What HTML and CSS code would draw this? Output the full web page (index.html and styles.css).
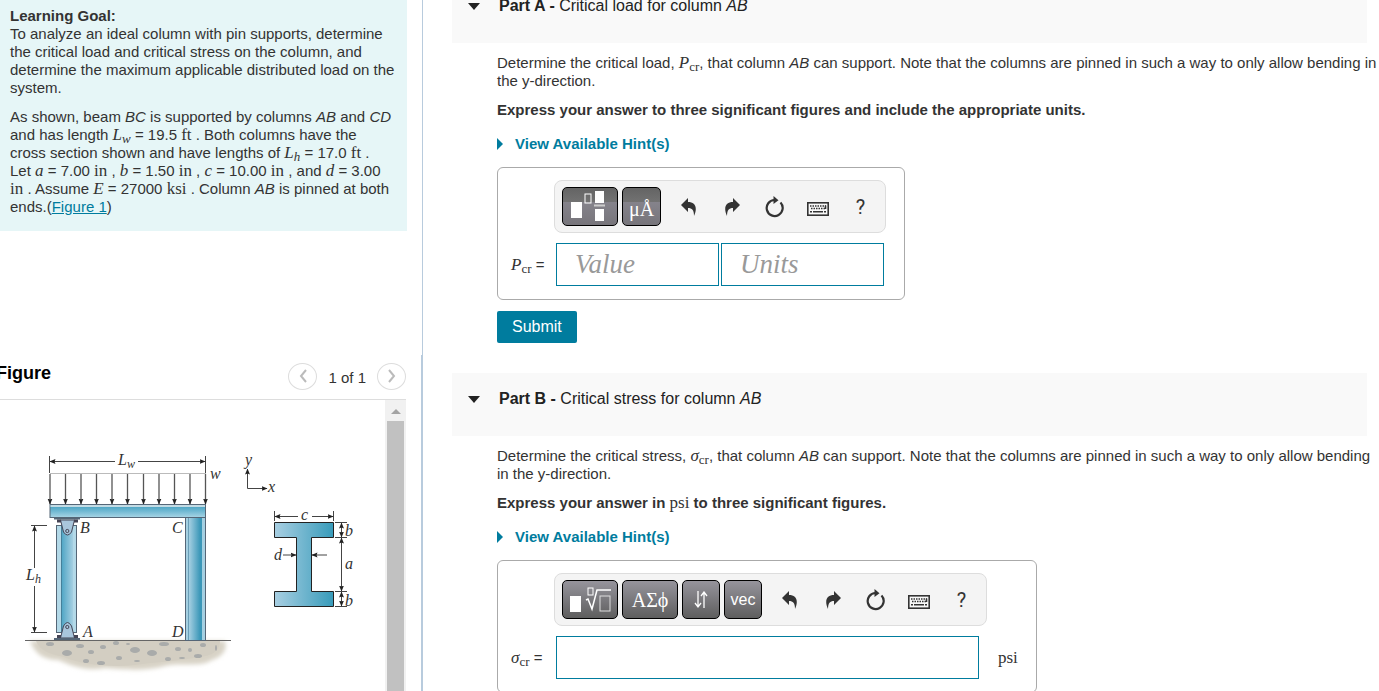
FILE: index.html
```html
<!DOCTYPE html>
<html lang="en">
<head>
    <meta charset="utf-8">
    <title>Critical load and critical stress</title>
    <link rel="stylesheet" href="styles.css">
</head>
<body>
    <!-- shared toolbar icons -->
    <svg class="defs" width="0" height="0">
        <symbol id="undo" viewBox="0 0 16 18">
            <path d="M0 7 L7 0 V4 C14 4 17 9 13 18 C13 12 11 10 7 10 V14 Z" fill="#333"/>
        </symbol>
        <symbol id="redo" viewBox="0 0 16 18">
            <path d="M16 7 L9 0 V4 C2 4 -1 9 3 18 C3 12 5 10 9 10 V14 Z" fill="#333"/>
        </symbol>
        <symbol id="reset" viewBox="0 0 20 22">
            <path d="M15.500 6.500 A8 8 0 1 1 9.500 4" fill="none" stroke="#333" stroke-width="2.200"/>
            <path d="M8.500 0 L13.500 4.200 L8.500 8 Z" fill="#333"/>
        </symbol>
        <symbol id="keyboard" viewBox="0 0 22 14">
            <rect x="0.800" y="0.800" width="20.400" height="12.400" fill="#f8f8f8" stroke="#333" stroke-width="1.600"/>
            <path d="M3 4 H19 M4 6.500 H19" stroke="#333" stroke-width="1.600" stroke-dasharray="1.500 1"/>
            <path d="M3 9.800 H5 M6 9.800 H16 M17 9.800 H19 M18.500 3.500 V7" stroke="#333" stroke-width="1.600"/>
        </symbol>
    </svg>

    <div class="page">
        <aside class="side">
            <section class="goal-pane">
                <div class="goal">
                    <p><b>Learning Goal:</b><br>
                    To analyze an ideal column with pin supports, determine the critical load and critical stress on the column, and determine the maximum applicable distributed load on the system.</p>
                    <p>As shown, beam <i>BC</i> is supported by columns <i>AB</i> and <i>CD</i> and has length <span class="math"><i>L</i><sub><i>w</i></sub></span> = 19.5 <span class="math">ft</span> . Both columns have the cross section shown and have lengths of <span class="math"><i>L</i><sub><i>h</i></sub></span> = 17.0 <span class="math">ft</span> .<br>
                    Let <i class="math">a</i> = 7.00 <span class="math">in</span> , <i class="math">b</i> = 1.50 <span class="math">in</span> , <i class="math">c</i> = 10.00 <span class="math">in</span> , and <i class="math">d</i> = 3.00 <span class="math">in</span> . Assume <i class="math">E</i> = 27000 <span class="math">ksi</span> . Column <i>AB</i> is pinned at both ends.(<a href="#figure">Figure 1</a>)</p>
                </div>
            </section>
            <section class="figure-pane" id="figure">
                <div class="figure-head">
                    <h2>Figure</h2>
                    <div class="pager">
                        <button type="button" aria-label="Previous figure"><svg width="8" height="14" viewBox="0 0 8 14"><path d="M7 1 L2 7 L7 13" fill="none" stroke="#bbb" stroke-width="2"/></svg></button>
                        <span>1 of 1</span>
                        <button type="button" aria-label="Next figure"><svg width="8" height="14" viewBox="0 0 8 14"><path d="M1 1 L6 7 L1 13" fill="none" stroke="#bbb" stroke-width="2"/></svg></button>
                    </div>
                </div>
                <div class="figure-view">
                    <svg class="drawing" viewBox="0 400 385 291" width="385" height="291">
                        <defs>
                            <linearGradient id="beam" x1="0" y1="0" x2="0" y2="1">
                                <stop offset="0" stop-color="#3f9dbd"/><stop offset="0.500" stop-color="#6fb8d2"/><stop offset="1" stop-color="#a9d5e5"/>
                            </linearGradient>
                            <linearGradient id="web">
                                <stop offset="0" stop-color="#4ba3c3"/><stop offset="1" stop-color="#a5cfe2"/>
                            </linearGradient>
                            <linearGradient id="colcd">
                                <stop offset="0" stop-color="#a5cfe2"/><stop offset="0.850" stop-color="#3b97b8"/><stop offset="1" stop-color="#3b97b8"/>
                            </linearGradient>
                            <linearGradient id="section" gradientUnits="userSpaceOnUse" x1="274" y1="0" x2="334" y2="0">
                                <stop offset="0" stop-color="#a9cfe2"/><stop offset="1" stop-color="#379bba"/>
                            </linearGradient>
                            <filter id="soft" x="-10%" y="-20%" width="120%" height="140%"><feGaussianBlur stdDeviation="2"/></filter>
                            <marker id="tip" viewBox="0 0 6 6" refX="5.500" refY="3" markerWidth="6" markerHeight="6" markerUnits="userSpaceOnUse" orient="auto-start-reverse"><path d="M0 0.500 L6 3 L0 5.500 L1 3 Z" fill="#222"/></marker>
                        </defs>

                        <!-- ground -->
                        <path d="M30 641 H225 C228 650 222 657 212 660 C200 668 180 662 165 666 C145 672 120 669 105 668 C85 672 70 665 58 660 C42 660 34 652 30 641 Z" fill="#d8d3c6" filter="url(#soft)"/>
                        <path d="M36 641 H220 C220 652 210 656 200 657 C180 661 155 662 135 665 C110 668 80 664 64 657 C48 654 40 650 36 641 Z" fill="#d3cec2"/>
                        <g fill="#a9abaa">
                            <ellipse cx="50" cy="644" rx="4" ry="2"/><ellipse cx="67" cy="653" rx="5" ry="3"/><ellipse cx="80" cy="646" rx="4" ry="2"/>
                            <ellipse cx="91" cy="652" rx="3" ry="2"/><ellipse cx="103" cy="647" rx="3" ry="2"/><ellipse cx="116" cy="643" rx="3" ry="2"/>
                            <ellipse cx="135" cy="650" rx="5" ry="3"/><ellipse cx="152" cy="653" rx="5" ry="3"/><ellipse cx="164" cy="644" rx="5" ry="2"/>
                            <ellipse cx="178" cy="649" rx="3" ry="2"/><ellipse cx="198" cy="656" rx="4" ry="2"/><ellipse cx="203" cy="645" rx="3" ry="2"/>
                            <ellipse cx="86" cy="661" rx="3" ry="2"/><ellipse cx="101" cy="663" rx="4" ry="2"/><ellipse cx="119" cy="658" rx="3" ry="2"/>
                            <ellipse cx="137" cy="661" rx="3" ry="1"/><ellipse cx="168" cy="659" rx="3" ry="2"/><ellipse cx="182" cy="658" rx="3" ry="1"/>
                            <ellipse cx="128" cy="644" rx="2" ry="1"/><ellipse cx="190" cy="650" rx="2" ry="2"/><ellipse cx="216" cy="648" rx="1" ry="3"/>
                        </g>
                        <path d="M25 640.500 H231" stroke="#666"/>

                        <!-- distributed load -->
                        <path d="M50 473.500 H206" stroke="#bbb"/>
                        <g stroke="#555" stroke-width="1.300">
                            <path d="M50 474 V504" marker-end="url(#tip)"/><path d="M65.500 474 V504" marker-end="url(#tip)"/><path d="M81 474 V504" marker-end="url(#tip)"/>
                            <path d="M96.500 474 V504" marker-end="url(#tip)"/><path d="M112 474 V504" marker-end="url(#tip)"/><path d="M127.500 474 V504" marker-end="url(#tip)"/>
                            <path d="M143.500 474 V504" marker-end="url(#tip)"/><path d="M159 474 V504" marker-end="url(#tip)"/><path d="M174.500 474 V504" marker-end="url(#tip)"/>
                            <path d="M190 474 V504" marker-end="url(#tip)"/><path d="M205.500 474 V504" marker-end="url(#tip)"/>
                        </g>

                        <!-- column CD and beam BC -->
                        <rect x="185.500" y="517.500" width="20" height="123" fill="#a5d0e2" stroke="#567"/>
                        <rect x="189" y="518" width="13" height="122" fill="url(#colcd)"/>
                        <path d="M188.500 518 V640" stroke="#6a9fb8"/>
                        <rect x="50" y="504.500" width="155.500" height="13" fill="url(#beam)" stroke="#567"/>
                        <rect x="50.500" y="505" width="154.500" height="2" fill="#c3dce5"/>

                        <!-- column AB -->
                        <rect x="56.500" y="525.500" width="20" height="107" fill="#b3d9e8" stroke="#567"/>
                        <rect x="61" y="526" width="12" height="106" fill="url(#web)"/>
                        <path d="M61.500 526 V632" stroke="#45809a"/>

                        <!-- pin brackets -->
                        <g fill="#a9c6dc" stroke="#445">
                            <path d="M60.500 520 H74.500 L71.500 532 Q67.500 538 63.500 532 Z"/>
                            <circle cx="67.300" cy="531" r="1.600"/>
                            <path d="M60.500 638 L63.500 626 Q67.500 619 71.500 626 L74.500 638 Z"/>
                            <circle cx="67.300" cy="627" r="1.600"/>
                        </g>
                        <path d="M54 518.500 H80 M54 639 H80" stroke="#567" stroke-width="2"/>
                        <path d="M57 521 H61 M74 521 H78 M57 636.500 H61 M74 636.500 H78" stroke="#445" stroke-width="3"/>

                        <!-- dimension lines of the frame -->
                        <g fill="none" stroke="#444">
                            <path d="M49.500 456 V473 M205.500 456 V473"/>
                            <path d="M115 461.500 H50" marker-end="url(#tip)"/>
                            <path d="M138 461.500 H205" marker-end="url(#tip)"/>
                            <path d="M31 525.500 H47 M31 632.500 H47"/>
                            <path d="M34.500 568 V526" marker-end="url(#tip)"/>
                            <path d="M34.500 586 V632" marker-end="url(#tip)"/>
                        </g>

                        <!-- axes -->
                        <g fill="none" stroke="#444">
                            <path d="M247.500 488.500 V469" marker-end="url(#tip)"/>
                            <path d="M247.500 488.500 H267" marker-end="url(#tip)"/>
                        </g>

                        <!-- cross section -->
                        <path d="M274.500 522.500 H333.500 V537.500 H311.500 V591.500 H333.500 V606.500 H274.500 V591.500 H296.500 V537.500 H274.500 Z" fill="url(#section)" stroke="#222"/>
                        <g fill="none" stroke="#444">
                            <path d="M274.500 511 V521 M333.500 511 V521"/>
                            <path d="M298 516.500 H275" marker-end="url(#tip)"/>
                            <path d="M312 516.500 H333" marker-end="url(#tip)"/>
                            <path d="M335 522.500 H347 M335 537.500 H347 M335 591.500 H347 M335 606.500 H347"/>
                            <path d="M341.500 523 V537" marker-start="url(#tip)" marker-end="url(#tip)"/>
                            <path d="M341.500 538 V591" marker-start="url(#tip)" marker-end="url(#tip)"/>
                            <path d="M341.500 592 V606" marker-start="url(#tip)" marker-end="url(#tip)"/>
                            <path d="M283 555 H296" marker-end="url(#tip)"/>
                            <path d="M327 555 H312" marker-end="url(#tip)"/>
                        </g>

                        <g class="labels">
                            <text x="118" y="465">L<tspan class="small" dy="3">w</tspan></text>
                            <text x="210" y="479">w</text>
                            <text x="80" y="533">B</text>
                            <text x="172" y="533">C</text>
                            <text x="83" y="637">A</text>
                            <text x="172" y="637">D</text>
                            <text x="26" y="580">L<tspan class="small" dy="3">h</tspan></text>
                            <text x="245" y="465">y</text>
                            <text x="268" y="492">x</text>
                            <text x="301" y="520">c</text>
                            <text x="345" y="536">b</text>
                            <text x="345" y="569">a</text>
                            <text x="345" y="606">b</text>
                            <text x="274" y="560">d</text>
                        </g>
                    </svg>
                    <div class="scrollbar"><span class="scroll-up"></span><span class="scroll-thumb"></span></div>
                </div>
            </section>
        </aside>

        <main class="parts">
            <section class="part">
                <h3 class="part-head"><span class="caret"></span><span><b>Part A -</b> Critical load for column <i>AB</i></span></h3>
                <div class="part-body">
                    <p>Determine the critical load, <span class="math"><i>P</i><sub>cr</sub></span>, that column <i>AB</i> can support. Note that the columns are pinned in such a way to only allow bending in<br>the y-direction.</p>
                    <p><b>Express your answer to three significant figures and include the appropriate units.</b></p>
                    <a class="hints" href="#hints-a">View Available Hint(s)</a>
                    <form class="answer">
                        <div class="toolbar">
                            <button type="button" class="key key-split" aria-label="Templates">
                                <svg width="40" height="31" viewBox="0 0 40 31">
                                    <rect x="1" y="11" width="11" height="16" fill="#fff"/>
                                    <rect x="15" y="3" width="6" height="9" fill="none" stroke="#fff"/>
                                    <rect x="25" y="0" width="9" height="12" fill="#fff"/>
                                    <path d="M24 14.500 H35" stroke="#ccc" stroke-width="2"/>
                                    <rect x="25" y="18" width="9" height="12" fill="#fff"/>
                                </svg>
                            </button>
                            <button type="button" class="key key-split key-unit">μÅ</button>
                            <div class="tools">
                                <button type="button" aria-label="Undo"><svg width="16" height="18"><use href="#undo"/></svg></button>
                                <button type="button" aria-label="Redo"><svg width="16" height="18"><use href="#redo"/></svg></button>
                                <button type="button" aria-label="Reset"><svg width="20" height="22"><use href="#reset"/></svg></button>
                                <button type="button" aria-label="Keyboard shortcuts"><svg class="keys" width="22" height="14"><use href="#keyboard"/></svg></button>
                                <button type="button">?</button>
                            </div>
                        </div>
                        <label for="pcr"><span class="math"><i>P</i><sub>cr</sub></span> =</label>
                        <div class="fields">
                            <input id="pcr" class="field" type="text" placeholder="Value">
                            <input class="field" type="text" placeholder="Units" aria-label="Units">
                        </div>
                    </form>
                    <button type="submit" class="submit">Submit</button>
                </div>
            </section>

            <section class="part">
                <h3 class="part-head"><span class="caret"></span><span><b>Part B -</b> Critical stress for column <i>AB</i></span></h3>
                <div class="part-body">
                    <p>Determine the critical stress, <span class="math"><i>σ</i><sub>cr</sub></span>, that column <i>AB</i> can support. Note that the columns are pinned in such a way to only allow bending<br>in the y-direction.</p>
                    <p><b>Express your answer in <span class="math">psi</span> to three significant figures.</b></p>
                    <a class="hints" href="#hints-b">View Available Hint(s)</a>
                    <form class="answer">
                        <div class="toolbar">
                            <button type="button" class="key" aria-label="Templates">
                                <svg width="44" height="28" viewBox="0 0 44 28">
                                    <rect x="2" y="10" width="11" height="16" fill="#fff"/>
                                    <rect x="20" y="2" width="5" height="7" fill="none" stroke="#fff"/>
                                    <path d="M18 14 L20 13 L24 23 L29 4 H43" fill="none" stroke="#fff" stroke-width="1.500"/>
                                    <rect x="32" y="10" width="10" height="15" fill="none" stroke="#ddd"/>
                                </svg>
                            </button>
                            <button type="button" class="key">ΑΣϕ</button>
                            <button type="button" class="key key-narrow" aria-label="Subscript and superscript">
                                <svg width="14" height="18" viewBox="0 0 14 18"><path d="M4 0 V16 M1 12 L4 16 L7 12 M10 17 V1 M7 5 L10 1 L13 5" fill="none" stroke="#fff" stroke-width="1.300"/></svg>
                            </button>
                            <button type="button" class="key key-narrow key-vec">vec</button>
                            <div class="tools">
                                <button type="button" aria-label="Undo"><svg width="16" height="18"><use href="#undo"/></svg></button>
                                <button type="button" aria-label="Redo"><svg width="16" height="18"><use href="#redo"/></svg></button>
                                <button type="button" aria-label="Reset"><svg width="20" height="22"><use href="#reset"/></svg></button>
                                <button type="button" aria-label="Keyboard shortcuts"><svg class="keys" width="22" height="14"><use href="#keyboard"/></svg></button>
                                <button type="button">?</button>
                            </div>
                        </div>
                        <label for="sigma"><span class="math"><i>σ</i><sub>cr</sub></span> =</label>
                        <div class="fields">
                            <input id="sigma" class="field field-wide" type="text">
                            <span class="unit math">psi</span>
                        </div>
                    </form>
                </div>
            </section>
        </main>
    </div>
</body>
</html>
```
FILE: styles.css
```css
*{
    box-sizing:border-box;
}
body{
    margin:0;
    font:15px/18px "Liberation Sans", Arial, sans-serif;
    color:#333;
    background:#fff;
}
button{
    padding:0;
    font:inherit;
    cursor:pointer;
}
p{
    margin:0 0 11px;
}
a{
    color:#007c9e;
}
svg{
    display:block;
}
.defs{
    position:absolute;
}
.page{
    display:grid;
    grid-template-columns:minmax(320px, 423px) minmax(0, 1fr);
    height:100vh;
    overflow:hidden;
}
.math{
    font-family:"Liberation Serif", "Times New Roman", serif;
    font-size:17px;
    font-weight:normal;
    line-height:1px;
}
.math sub{
    font-size:13px;
    line-height:1px;
    vertical-align:-3px;
}

/* left column */
.side{
    display:grid;
    grid-template-rows:355px minmax(0, 1fr);
    min-height:0;
}
.goal-pane{
    padding-right:15px;
    border-right:1px solid #b8cbdd;
}
.goal{
    padding:7px 12px 4px 10px;
    background:#e6f6f7;
}
.figure-pane{
    display:flex;
    flex-direction:column;
    min-height:0;
    overflow:hidden;
    padding-right:15px;
    border-right:2px solid #b8cbdd;
}
.figure-head{
    display:flex;
    justify-content:space-between;
    align-items:center;
    height:45px;
    flex:none;
    border-bottom:1px solid #ddd;
}
.figure-head h2{
    margin:0 0 8px -4px;
    font-size:18px;
    line-height:20px;
    color:#000;
}
.pager{
    display:flex;
    align-items:center;
    gap:11px;
    margin-bottom:2px;
}
.pager span{
    padding-top:4px;
}
.pager button{
    display:flex;
    align-items:center;
    justify-content:center;
    width:29px;
    height:27px;
    border:1px solid #ddd;
    border-radius:50%;
    background:#fff;
}
.figure-view{
    display:flex;
    justify-content:space-between;
    flex:1;
    min-height:0;
    overflow:hidden;
}
.drawing{
    flex:0 1 385px;
    min-width:0;
}
.labels{
    font:italic 16px "Liberation Serif", "Times New Roman", serif;
    fill:#333;
}
.small{
    font-size:12px;
}
.scrollbar{
    display:flex;
    flex-direction:column;
    width:21px;
    padding:0 2px;
    background:#f1f1f1;
}
.scroll-up{
    margin:9px auto 7px;
    border:5px solid transparent;
    border-top:0;
    border-bottom-color:#a3a3a3;
}
.scroll-thumb{
    flex:1;
    background:#c1c1c1;
}

/* right column */
.parts{
    margin-top:-20px;
    padding:0 12px 0 29px;
}
.part{
    margin-bottom:30px;
}
.part-head{
    display:flex;
    height:63px;
    margin:0;
    padding:16px 16px 0;
    font-size:16px;
    font-weight:normal;
    line-height:20px;
    color:#222;
    background:#f9f9f9;
}
.caret{
    width:12px;
    height:7px;
    margin:7px 19px 0 0;
    background:#222;
    clip-path:polygon(0 0, 100% 0, 50% 100%);
}
/* question text may run into the page's right padding */
.part-body{
    margin-right:-12px;
    padding:11px 0 0 45px;
}
.hints{
    display:flex;
    align-items:center;
    margin:16px 0 14px;
    font-weight:bold;
    text-decoration:none;
}
.hints::before{
    content:"";
    width:6px;
    height:12px;
    margin-right:12px;
    background:#007c9e;
    clip-path:polygon(0 0, 100% 50%, 0 100%);
}
.answer{
    display:grid;
    grid-template-columns:43px auto;
    row-gap:10px;
    width:fit-content;
    padding:12px 18px 13px 13px;
    border:1px solid #aaa;
    border-radius:6px;
}
.toolbar{
    display:flex;
    grid-column:2;
    justify-self:start;
    gap:4px;
    height:53px;
    padding:6px 3px 0 7px;
    border:1px solid #ddd;
    border-radius:8px;
    background:#f4f4f4;
}
.key{
    display:flex;
    align-items:center;
    justify-content:center;
    width:56px;
    height:39px;
    border:1px solid #000;
    border-radius:5px;
    color:#fff;
    background:linear-gradient(#96949c, #5e5e5e);
    font:20px/20px "Liberation Serif", "Times New Roman", serif;
}
.key-split{
    background:linear-gradient(#646464, #727272 38%, #85838b 38%, #77757b);
}
.key-unit{
    width:39px;
    padding-top:4px;
}
.key-narrow{
    width:38px;
}
.key-vec{
    font:16px/20px "Liberation Sans", Arial, sans-serif;
}
.tools{
    display:flex;
    margin-left:2px;
}
.tools button{
    display:flex;
    align-items:center;
    justify-content:center;
    width:43px;
    height:39px;
    border:0;
    color:#333;
    background:none;
    font:20px/20px Roboto, sans-serif;
}
.keys{
    margin-top:4px;
}
.answer label{
    align-self:center;
    white-space:nowrap;
}
.fields{
    display:flex;
    align-items:center;
    gap:2px;
    padding-left:2px;
}
.field{
    width:163px;
    height:43px;
    padding:0 18px;
    border:1px solid #007c9e;
    color:#333;
    background:#fff;
    font:27px "Liberation Serif", "Times New Roman", serif;
}
.field::placeholder{
    color:#999;
    font-style:italic;
}
.field-wide{
    width:423px;
}
.unit{
    margin-left:17px;
}
.submit{
    display:block;
    height:32px;
    margin-top:11px;
    padding:0 15px;
    border:0;
    border-radius:2px;
    color:#fff;
    background:#007c9e;
    font-size:16px;
}
```
